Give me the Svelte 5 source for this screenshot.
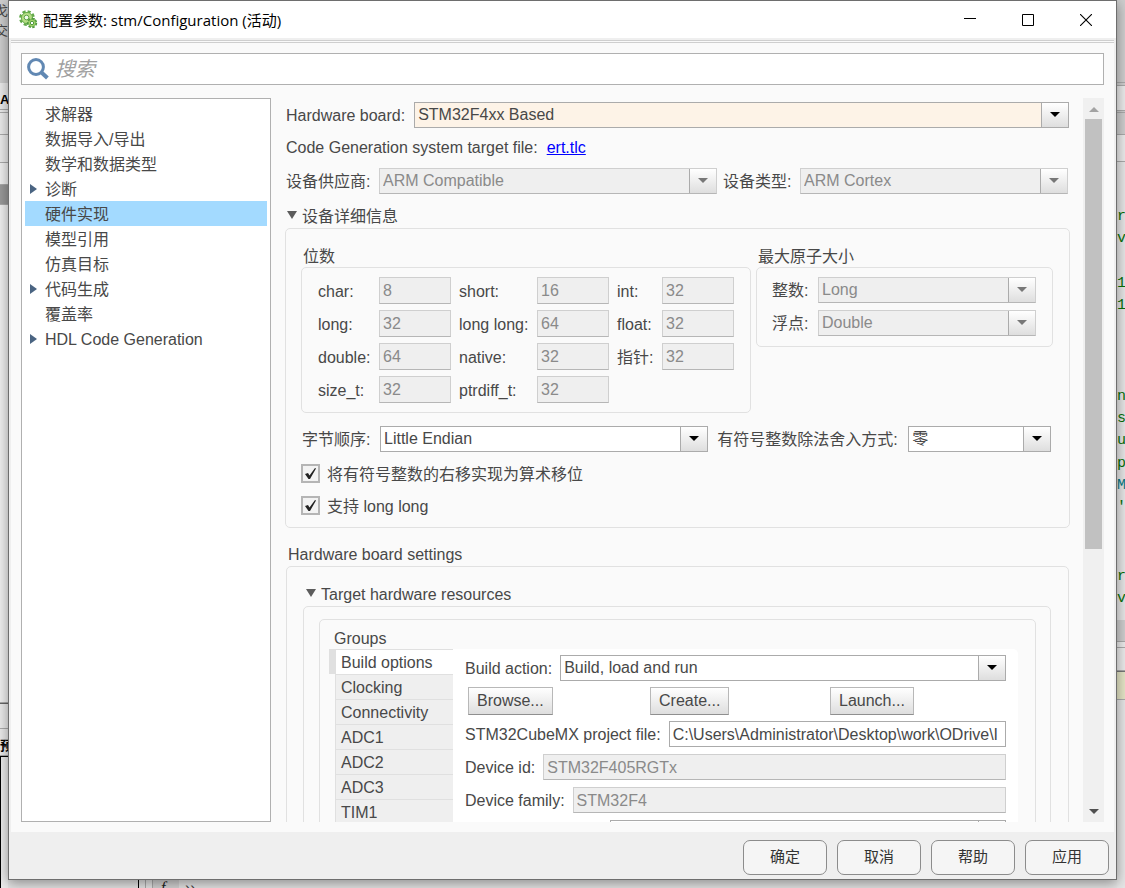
<script>
	const nav = [
		{ label: '求解器' },
		{ label: '数据导入/导出' },
		{ label: '数学和数据类型' },
		{ label: '诊断', children: true },
		{ label: '硬件实现' },
		{ label: '模型引用' },
		{ label: '仿真目标' },
		{ label: '代码生成', children: true },
		{ label: '覆盖率' },
		{ label: 'HDL Code Generation', children: true }
	];
	let current = '硬件实现';

	const sizes = [
		['char', '8'], ['short', '16'], ['int', '32'],
		['long', '32'], ['long long', '64'], ['float', '32'],
		['double', '64'], ['native', '32'], ['指针', '32'],
		['size_t', '32'], ['ptrdiff_t', '32']
	];

	const groups = ['Build options', 'Clocking', 'Connectivity', 'ADC1', 'ADC2', 'ADC3', 'TIM1'];
	let group = 'Build options';

	let search = '';
	let arithmeticShift = true;
	let longLong = true;
	let projectFile = 'C:\\Users\\Administrator\\Desktop\\work\\ODrive\\I';

	// slices of the windows behind the dialog: height, kind, text
	const left = [
		[20, 'bar', '戈'], [24, 'bar', '交'], [39, 'bar', ''], [27, 'pale bold', 'AC'], [3, 'pale', ''],
		[22, 'pale', ''], [28, 'pale', ''], [22, 'plain', ''], [20, 'dark', ''], [498, 'plain', ''],
		[26, 'pale edge', ''], [27, 'pale bold', '预'], [132, 'frame', '']
	];
	const right = [
		[83, 'bar', ''], [3, 'bar', ''], [25, 'pale', ''], [2, 'bar', ''], [22, 'bar', ''], [27, 'pale', ''],
		[44, 'code', ''], [22, 'code', 'r'], [23, 'code', 'v'], [22, 'code', ''], [22, 'code', '1'], [23, 'code', '1'],
		[68, 'code', ''], [22, 'code', 'n'], [22, 'code', 's'], [23, 'code', 'u'], [22, 'code', 'p'], [22, 'code teal', 'M'],
		[23, 'code', "'"], [46, 'code', ''], [22, 'code', 'r'], [22, 'code', 'v'], [10, 'code', ''], [22, 'bar', ''],
		[6, 'pale', ''], [23, 'pale', ''], [29, 'note', ''], [188, 'code', '']
	];
</script>

<div class="desktop">
	<div class="strip">
		{#each left as [h, kind, text]}
			<div class="slice {kind}" style="height: {h}px">{text}</div>
		{/each}
	</div>

	<div class="dialog">
		<header>
			<svg class="logo" width="19" height="19" viewBox="0 0 19 19">
				<circle cx="8" cy="8" r="6.4" fill="none" stroke="#62a84a" stroke-width="3" stroke-dasharray="3 2" />
				<circle cx="8" cy="8" r="5.6" fill="#b5dc86" stroke="#6bb04f" />
				<circle cx="7.500" cy="7.500" r="2.300" fill="#f4faee" stroke="#5fa548" />
				<circle cx="13" cy="13" r="3.800" fill="none" stroke="#4f9a3d" stroke-width="2.800" stroke-dasharray="2.200 1.200" />
				<circle cx="13" cy="13" r="3.600" fill="#a6d86c" stroke="#5fa548" stroke-width=".6" />
				<circle cx="13" cy="13" r="1.700" fill="#fff" stroke="#4e9640" />
			</svg>
			<h1>配置参数: stm/Configuration (活动)</h1>
			<button class="win" aria-label="最小化">
				<svg width="12" height="12" viewBox="0 0 12 12"><path d="M0 4.500h12" stroke="#000" /></svg>
			</button>
			<button class="win" aria-label="最大化">
				<svg width="12" height="12" viewBox="0 0 12 12"><path d="M.5.5h11v11H.5z" fill="none" stroke="#000" /></svg>
			</button>
			<button class="win" aria-label="关闭">
				<svg width="12" height="12" viewBox="0 0 12 12"><path d="M0 0l12 12M12 0L0 12" stroke="#000" stroke-width="1.1" /></svg>
			</button>
		</header>

		<main>
			<label class="search">
				<svg width="22" height="22" viewBox="0 0 22 22">
					<circle cx="9" cy="9" r="7.4" fill="none" stroke="#6188b3" stroke-width="3" />
					<path d="M14 14l6.4 6" stroke="#6188b3" stroke-width="4" />
				</svg>
				<input type="text" placeholder="搜索" aria-label="搜索" bind:value={search}>
			</label>

			<div class="panels">
				<nav>
					{#each nav as item}
						<button class:active={item.label === current} on:click={() => current = item.label}>
							{#if item.children}
								<svg width="7" height="10" viewBox="0 0 7 10"><path d="M0 0l7 5-7 5z" fill="#4a6482" /></svg>
							{/if}
							<span>{item.label}</span>
						</button>
					{/each}
				</nav>

				<section class="pane">
					<div class="row">
						<label for="board">Hardware board:</label>
						<span class="combo grow"><select id="board" class="changed"><option>STM32F4xx Based</option></select></span>
					</div>
					<div class="row">
						<span>Code Generation system target file:</span>
						<a href="#tlc">ert.tlc</a>
					</div>
					<div class="row vendor">
						<label for="vendor">设备供应商:</label>
						<span class="combo"><select id="vendor" disabled><option>ARM Compatible</option></select></span>
						<label for="type">设备类型:</label>
						<span class="combo"><select id="type" disabled><option>ARM Cortex</option></select></span>
					</div>

					<h2><svg width="10" height="8" viewBox="0 0 10 8"><path d="M0 0h10L5 8z" fill="#5c5c5c" /></svg>设备详细信息</h2>
					<div class="box details">
						<div class="pair">
							<div class="bits">
								<h3>位数</h3>
								<div class="box sizes">
									{#each sizes as [name, value], i}
										<label for="size{i}">{name}:</label>
										<input id="size{i}" type="text" {value} disabled>
									{/each}
								</div>
							</div>
							<div class="atomic">
								<h3>最大原子大小</h3>
								<div class="box atoms">
									<label for="integer">整数:</label>
									<span class="combo"><select id="integer" disabled><option>Long</option></select></span>
									<label for="floating">浮点:</label>
									<span class="combo"><select id="floating" disabled><option>Double</option></select></span>
								</div>
							</div>
						</div>
						<div class="row order">
							<label for="endian">字节顺序:</label>
							<span class="combo"><select id="endian"><option>Little Endian</option></select></span>
							<label for="rounding">有符号整数除法舍入方式:</label>
							<span class="combo"><select id="rounding"><option>零</option></select></span>
						</div>
						<label class="check"><input type="checkbox" bind:checked={arithmeticShift}><span>将有符号整数的右移实现为算术移位</span></label>
						<label class="check"><input type="checkbox" bind:checked={longLong}><span>支持 long long</span></label>
					</div>

					<h2 class="settings">Hardware board settings</h2>
					<div class="box board">
						<h2><svg width="10" height="8" viewBox="0 0 10 8"><path d="M0 0h10L5 8z" fill="#5c5c5c" /></svg>Target hardware resources</h2>
						<div class="box resources">
							<div class="box groups">
								<h3>Groups</h3>
								<div class="split">
									<div class="tabs">
										{#each groups as name}
											<button class:active={name === group} on:click={() => group = name}>{name}</button>
										{/each}
									</div>
									<div class="sheet">
										<div class="row">
											<label for="action">Build action:</label>
											<span class="combo grow"><select id="action"><option>Build, load and run</option></select></span>
										</div>
										<div class="tools">
											<div><button>Browse...</button></div>
											<div><button>Create...</button></div>
											<div><button>Launch...</button></div>
										</div>
										<div class="row">
											<label for="project">STM32CubeMX project file:</label>
											<input id="project" class="grow" type="text" bind:value={projectFile}>
										</div>
										<div class="row">
											<label for="device">Device id:</label>
											<input id="device" class="grow" type="text" value="STM32F405RGTx" disabled>
										</div>
										<div class="row">
											<label for="family">Device family:</label>
											<input id="family" class="grow" type="text" value="STM32F4" disabled>
										</div>
										<div class="row last">
											<span class="combo grow"><select aria-label="Programmer"></select></span>
										</div>
									</div>
								</div>
							</div>
						</div>
					</div>
				</section>

				<div class="scroll">
					<svg width="10" height="5" viewBox="0 0 10 5"><path d="M0 5l5-5 5 5z" fill="#a3a3a3" /></svg>
					<div class="track"><div class="thumb"></div></div>
					<svg width="10" height="5" viewBox="0 0 10 5"><path d="M0 0l5 5 5-5z" fill="#505050" /></svg>
				</div>
			</div>
		</main>

		<footer>
			<button>确定</button>
			<button>取消</button>
			<button>帮助</button>
			<button>应用</button>
		</footer>
	</div>

	<div class="strip">
		{#each right as [h, kind, text]}
			<div class="slice {kind}" style="height: {h}px">{text}</div>
		{/each}
	</div>
	<div class="under">
		<i class="doc"></i><i class="gap"></i><i class="gap"></i><em>f</em><span>››</span>
	</div>
</div>

<style>
	:global(body){
		margin: 0;
	}
	.desktop{
		display: grid;
		grid-template-columns: 8px minmax(0, 1fr) 8px;
		grid-template-rows: minmax(0, 1fr) 8px;
		height: 100vh;
		overflow: hidden;
		background: #e4e4e4;
		color: #484848;
		font-family: "Liberation Sans", "Noto Sans CJK SC", sans-serif;
		font-size: 16px;
		line-height: 22px;
	}
	button, input, select{
		font: inherit;
		color: inherit;
		box-sizing: border-box;
		margin: 0;
	}
	label, h1, h2, h3, a, .row > span{
		white-space: nowrap;
	}

	/* windows behind */
	.strip{
		grid-row: 1 / 3;
		overflow: hidden;
	}
	.slice{
		box-sizing: border-box;
		overflow: hidden;
		white-space: nowrap;
		border-bottom: 1px solid #aaa;
	}
	.bar{
		background: #cecece;
		direction: rtl;
	}
	.strip:first-child .bar{
		border: 0;
		font-size: 13px;
	}
	.pale{
		background: #ebebeb;
	}
	.plain{
		background: #f0f0f0;
	}
	.bold{
		color: #000;
		font-size: 13px;
		font-weight: bold;
		line-height: 34px;
	}
	.dark{
		background: #999;
	}
	.edge{
		border-top: 1px solid #666;
	}
	.frame{
		border: 0;
		border-top: 1px solid #000;
		border-left: 1px solid #000;
		background: #ececec;
	}
	.code{
		border: 0;
		background: #e6e6e6;
		color: #087008;
		font-family: "Liberation Mono", monospace;
		font-size: 15px;
	}
	.teal{
		color: #067a86;
	}
	.note{
		background: #e5e5c6;
		border-top: 1px solid #777;
	}
	.under{
		grid-column: 2;
		grid-row: 2;
		display: flex;
		overflow: hidden;
		line-height: 16px;
	}
	.doc{
		width: 130px;
		border-right: 1px solid #000;
	}
	.gap{
		width: 6px;
		border-right: 1px solid #aaa;
	}
	.under em{
		width: 26px;
		padding-left: 8px;
		box-sizing: border-box;
		background: #d2d2d2;
		color: #222;
		font-family: "Liberation Serif", serif;
	}
	.under span{
		padding-left: 6px;
	}

	/* dialog */
	.dialog{
		position: relative;
		grid-column: 2;
		grid-row: 1;
		display: flex;
		flex-direction: column;
		border: 1px solid #6e6e6e;
		background: #efefef;
		box-shadow: 0 3px 12px rgba(0,0,0,.4);
	}
	header{
		display: flex;
		align-items: center;
		height: 37px;
		padding: 0 1px 0 10px;
		background: #fff;
	}
	h1{
		flex: 1;
		margin: 0 0 0 5px;
		color: #000;
		font-family: "Open Sans", "Noto Sans CJK SC", sans-serif;
		font-size: 15px;
		font-weight: normal;
	}
	.win{
		display: flex;
		align-items: center;
		justify-content: center;
		width: 58px;
		height: 36px;
		padding: 0;
		border: 0;
		background: none;
	}
	main{
		flex: 1;
		display: flex;
		flex-direction: column;
		min-height: 0;
		margin: 2px 2px 0;
		padding: 10px;
		border-top: 3px double #cfcfcf;
		background: #fafafa;
	}
	.search{
		display: flex;
		align-items: center;
		height: 30px;
		margin-bottom: 13px;
		padding-left: 5px;
		border: 1px solid #b0b0b0;
		background: #fff;
	}
	.search input{
		flex: 1;
		height: 28px;
		background: none;
		outline: none;
		font-size: 20px;
		font-style: italic;
	}
	.search input::placeholder{
		color: #a0a0a0;
	}
	.panels{
		flex: 1;
		display: flex;
		min-height: 0;
	}
	nav{
		flex: 0 0 242px;
		padding: 2px 3px;
		border: 1px solid #b0b0b0;
		background: #fff;
	}
	nav button{
		display: flex;
		align-items: center;
		width: 100%;
		height: 25px;
		padding: 0 0 0 5px;
		border: 0;
		background: none;
		text-align: left;
	}
	nav button svg{
		margin-right: -7px;
	}
	nav button span{
		margin-left: 15px;
		padding-top: 2px;
	}
	nav button.active{
		background: #a3daff;
	}

	.pane{
		flex: 1;
		min-width: 0;
		margin: 0 13px 0 14px;
		padding-top: 4px;
		box-sizing: border-box;
		overflow: hidden;
	}
	.row{
		display: flex;
		align-items: center;
		gap: 9px;
		height: 26px;
		margin: 0 1px 7px;
	}
	.grow{
		flex: 1;
		min-width: 0;
	}
	.pane label:not(.check), .check span{
		padding-top: 2px;
	}
	a{
		color: #00f;
	}
	.vendor{
		display: grid;
		grid-template-columns: 87px 338fr 71px 268fr;
		gap: 6px;
		margin-right: 2px;
	}
	.combo{
		position: relative;
		display: flex;
	}
	.combo::after{
		content: "";
		position: absolute;
		right: 9px;
		top: 10px;
		border: 5px solid transparent;
		border-top-color: #000;
		border-bottom: 0;
		pointer-events: none;
	}
	.combo:has(:disabled)::after{
		border-top-color: #777;
	}
	select, input[type="text"]{
		width: 100%;
		height: 26px;
		padding: 1px 3px 0;
		border: 1px solid #ababab;
		border-radius: 0;
		background-color: #fff;
	}
	select{
		appearance: none;
		padding: 0 30px 0 3px;
		background-image: linear-gradient(#fff, #dedede), linear-gradient(#ababab, #ababab);
		background-position: right, right;
		background-size: 26px 100%, 27px 100%;
		background-repeat: no-repeat;
	}
	select.changed{
		background-color: #fdf3e7;
	}
	select:disabled, input[type="text"]:disabled{
		border-color: #cfcfcf #cfcfcf #b6b6b6;
		background-color: #efefef;
		color: #8a8a8a;
		opacity: 1;
	}
	.search input[type="text"]{
		width: auto;
		padding: 1px 7px 0 6px;
		border: 0;
	}

	h2, h3{
		margin: 0;
		font-size: 16px;
		font-weight: normal;
	}
	h2{
		display: flex;
		align-items: center;
		gap: 5px;
		height: 22px;
		padding: 5px 0 0 2px;
	}
	h2 svg{
		margin-bottom: 4px;
	}
	h3{
		height: 21px;
		padding: 1px 0 0 2px;
	}
	.box{
		border: 1px solid #e1e1e1;
		border-radius: 5px;
	}
	.details{
		padding: 16px 16px 12px 15px;
	}
	.pair{
		display: flex;
		align-items: flex-start;
		gap: 5px;
		margin-bottom: 13px;
	}
	.atomic{
		flex: 1;
	}
	.sizes{
		display: grid;
		grid-template-columns: 53px 72px 70px 72px 37px 72px;
		align-items: center;
		gap: 6px 8px;
		padding: 9px 16px;
	}
	.sizes input[type="text"]{
		height: 27px;
		padding: 0 3px;
	}
	.atoms{
		display: grid;
		grid-template-columns: 38px 1fr;
		align-items: center;
		gap: 7px 8px;
		padding: 9px 16px 10px 15px;
	}
	.order{
		display: grid;
		grid-template-columns: 69px 329fr 182px 143fr;
		margin: 0 2px 12px 1px;
	}
	.check{
		display: flex;
		align-items: center;
		gap: 7px;
		height: 19px;
		margin-bottom: 13px;
	}
	.check:last-child{
		margin: 0;
	}
	.check input{
		appearance: none;
		width: 19px;
		height: 19px;
		border: 2px solid #b5b5b5;
		background: #f3f3f3;
	}
	.check input:checked{
		background: #f3f3f3 url("data:image/svg+xml,%3Csvg xmlns='http://www.w3.org/2000/svg' viewBox='0 0 15 15'%3E%3Cpath d='M2 8l3-1 1.500 2.500L12 2l1 .500L7 13H5.500z' fill='%23222'/%3E%3C/svg%3E");
	}
	.settings{
		margin-top: 11px;
		padding-left: 3px;
	}
	.board{
		margin: 0 1px;
		padding: 12px 17px 80px 16px;
	}
	.board h2{
		padding-left: 3px;
	}
	.resources{
		padding: 12px 14px 80px 15px;
	}
	.groups{
		padding: 7px 17px 80px 9px;
	}
	.groups h3{
		padding-left: 5px;
	}
	.split{
		display: flex;
	}
	.tabs{
		width: 124px;
	}
	.tabs button{
		display: block;
		width: 118px;
		height: 25px;
		margin-left: 6px;
		padding: 1px 0 0 5px;
		border: 0 solid #e0e0e0;
		border-width: 1px 0 0 1px;
		background: #efefef;
		text-align: left;
	}
	.tabs button.active{
		width: 124px;
		margin-left: 0;
		border-left-width: 7px;
		background: #fff;
	}
	.sheet{
		flex: 1;
		min-width: 0;
		padding: 6px 12px 60px;
		border-radius: 0 5px 0 0;
		background: #fff;
	}
	.sheet .row{
		gap: 8px;
		margin: 0 0 7px;
	}
	.sheet .row:first-child{
		margin-bottom: 6px;
	}
	.tools{
		display: grid;
		grid-template-columns: 182fr 180fr 176fr;
		margin-bottom: 6px;
		padding-left: 3px;
	}
	.tools button{
		display: block;
		height: 28px;
		padding: 0 8px;
		border: 1px solid #b8b8b8;
		border-bottom-color: #8f8f8f;
		background: linear-gradient(#fff, #dedede);
	}
	.sheet .last{
		margin-left: 145px;
	}

	.scroll{
		display: flex;
		flex-direction: column;
		align-items: center;
		width: 21px;
		padding: 9px 0 8px;
		background: #f0f0f0;
	}
	.track{
		flex: 1;
		width: 17px;
		margin: 7px 0;
	}
	.thumb{
		height: 63%;
		background: #c1c1c1;
	}

	footer{
		display: flex;
		justify-content: flex-end;
		gap: 10px;
		padding: 8px 7px 4px;
	}
	footer button{
		width: 84px;
		height: 35px;
		padding: 0 0 2px;
		border: 1px solid #8c8c8c;
		border-radius: 7px;
		background: #f5f5f5;
		color: #333;
		font-size: 15px;
	}
</style>
